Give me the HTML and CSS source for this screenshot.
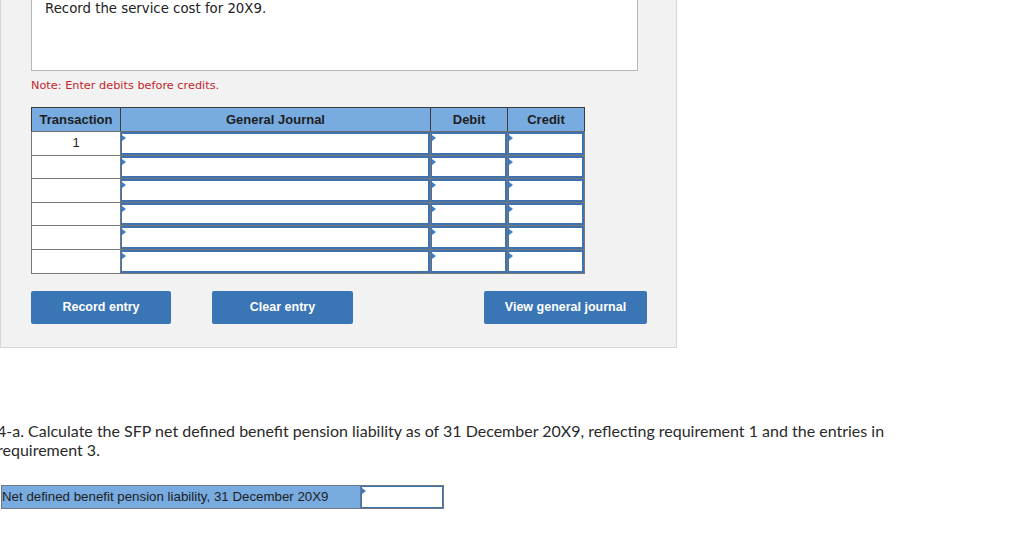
FILE: index.html
```html
<!DOCTYPE html>
<html lang="en">
<head>
	<meta charset="UTF-8">
	<meta name="viewport" content="width=device-width">
	<title>Pension journal</title>

	<link rel="stylesheet" href="styles.css">
</head>
<body>
<main>

<section class="panel">
	<div class="prompt">Record the service cost for 20X9.</div>

	<p class="note">Note: Enter debits before credits.</p>

	<table class="journal">
		<thead>
			<tr>
				<th class="col-trans">Transaction</th>
				<th class="col-gj">General Journal</th>
				<th class="col-amt">Debit</th>
				<th class="col-amt">Credit</th>
			</tr>
		</thead>
		<tbody>
			<tr>
				<td class="trans">1</td>
				<td class="entry"><div class="field"></div></td>
				<td class="entry"><div class="field"></div></td>
				<td class="entry"><div class="field"></div></td>
			</tr>
			<tr>
				<td class="trans"></td>
				<td class="entry"><div class="field"></div></td>
				<td class="entry"><div class="field"></div></td>
				<td class="entry"><div class="field"></div></td>
			</tr>
			<tr>
				<td class="trans"></td>
				<td class="entry"><div class="field"></div></td>
				<td class="entry"><div class="field"></div></td>
				<td class="entry"><div class="field"></div></td>
			</tr>
			<tr>
				<td class="trans"></td>
				<td class="entry"><div class="field"></div></td>
				<td class="entry"><div class="field"></div></td>
				<td class="entry"><div class="field"></div></td>
			</tr>
			<tr>
				<td class="trans"></td>
				<td class="entry"><div class="field"></div></td>
				<td class="entry"><div class="field"></div></td>
				<td class="entry"><div class="field"></div></td>
			</tr>
			<tr>
				<td class="trans"></td>
				<td class="entry"><div class="field"></div></td>
				<td class="entry"><div class="field"></div></td>
				<td class="entry"><div class="field"></div></td>
			</tr>
		</tbody>
	</table>

	<div class="actions">
		<button class="btn btn-record">Record entry</button>
		<button class="btn btn-clear">Clear entry</button>
		<button class="btn btn-view">View general journal</button>
	</div>
</section>

<p class="question">4-a. Calculate the SFP net defined benefit pension liability as of 31 December 20X9, reflecting requirement 1 and the entries in requirement 3.</p>

<table class="answer">
	<tr>
		<td class="answer-label">Net defined benefit pension liability, 31 December 20X9</td>
		<td class="entry answer-cell"><div class="field"></div></td>
	</tr>
</table>

</main>
</body>
</html>
```

FILE: styles.css
```css
body {
	margin: 0;
	background: #fff;
	color: #222;
	width: 1024px;
	overflow: hidden;
}

/* grey question panel, its top is scrolled off */
.panel {
	width: 614px;
	margin-top: -20px;
	padding: 0 31px 23px 30px;
	background: #f2f2f2;
	border: 1px solid #d6d6d6;
}

.prompt {
	width: 592px;
	height: 57px;
	padding: 19px 0 12px 13px;
	background: #fff;
	border: 1px solid #b8b8b8;
	font: 13.3px "DejaVu Sans", Verdana, sans-serif;
	color: #222;
	line-height: 15px;
}

.note {
	margin: 8px 0 14px 0;
	font: 11.3px "DejaVu Sans", Verdana, sans-serif;
	line-height: 14px;
	color: #c3252c;
}

table.journal {
	border-collapse: collapse;
	font-family: "Liberation Sans", Arial, sans-serif;
	font-size: 13px;
}

table.journal th {
	height: 23px;
	padding: 0;
	background: #78abe0;
	border: 1px solid #3c3c3c;
	border-bottom-color: #6d6d6d;
	color: #1e1e1e;
	font-weight: bold;
	text-align: center;
}

.col-trans { width: 88px; }
.col-gj { width: 309px; }
.col-amt { width: 76px; }

table.journal td {
	height: 22.6px;
	padding: 0;
	border: 1px solid #777;
	background: #fff;
}

td.trans {
	text-align: center;
	color: #222;
	vertical-align: top;
	line-height: 22px;
}

td.entry {
	position: relative;
}

.field {
	height: 18.6px;
	border: 2px solid #3f72b0;
	border-left-width: 1px;
	background: #fff;
	position: relative;
}

/* small blue marker in the corner of each input */
.field::before {
	content: "";
	position: absolute;
	left: 0;
	top: 1px;
	border-left: 4px solid #3b7fc8;
	border-top: 3px solid transparent;
	border-bottom: 3px solid transparent;
}

.actions {
	display: flex;
	margin-top: 17px;
	height: 33px;
}

.btn {
	flex-shrink: 0;
	height: 33px;
	padding: 0;
	border: none;
	border-radius: 2px;
	background: #3a75b6;
	color: #fff;
	font: bold 12.5px "Liberation Sans", Arial, sans-serif;
	cursor: pointer;
}

.btn-record { width: 140px; }
.btn-clear { width: 141px; margin-left: 41px; }
.btn-view { width: 163px; margin-left: 131px; }

.question {
	margin: 73px 0 0 -3px;
	width: 910px;
	font: 16px Lato, "Liberation Sans", sans-serif;
	line-height: 19px;
	color: #2a2a2a;
}

table.answer {
	width: 443px;
	margin: 26px 0 0 1px;
	border-collapse: collapse;
	table-layout: fixed;
	font: 13.3px "Liberation Sans", Arial, sans-serif;
}

table.answer td {
	height: 22px;
	padding: 0;
	border: 1px solid #6f7782;
}

td.answer-label {
	width: 358px;
	padding-left: 4px;
	background: #78abe0;
	color: #1e1e1e;
	white-space: nowrap;
}

td.answer-cell {
	background: #fff;
}

td.answer-cell .field {
	height: 20px;
	border-width: 1px;
}
```
